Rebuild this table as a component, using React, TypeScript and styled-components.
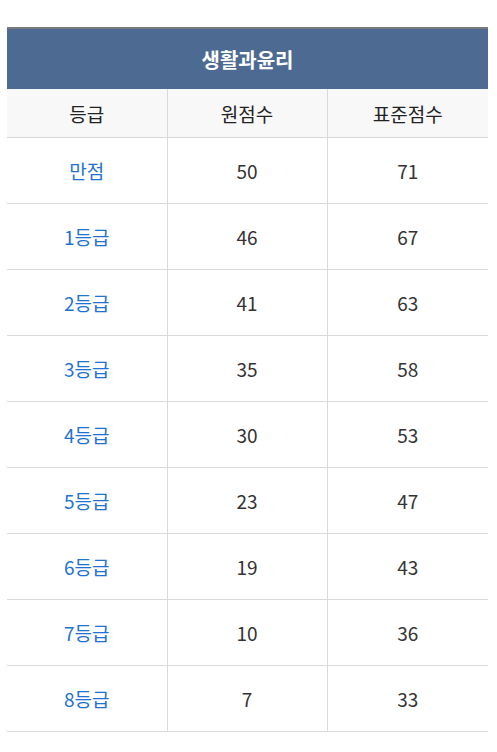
import React from "react";
import styled, { createGlobalStyle } from "styled-components";

const GlobalStyle = createGlobalStyle`
  html, body {
    margin: 0;
    padding: 0;
    background: #fff;
  }
  body {
    font-family: "Malgun Gothic", "Noto Sans CJK KR", "Noto Sans", sans-serif;
  }
`;

const Wrap = styled.div`
  padding: 27px 9px 20px 7px;
`;

const Table = styled.table`
  width: 481px;
  border-collapse: collapse;
  border-top: 2px solid #7a7a7a;
  table-layout: fixed;
`;

const TitleCell = styled.th`
  background: #4d6a92;
  color: #fff;
  font-size: 20px;
  font-weight: 700;
  height: 60px;
  padding: 0;
  text-align: center;
`;

const HeadCell = styled.th`
  background: #f8f8f8;
  color: #222;
  font-size: 19px;
  font-weight: 400;
  height: 48px;
  padding: 0;
  text-align: center;
  border-bottom: 1px solid #d9d9d9;
  & + & {
    border-left: 1px solid #d9d9d9;
  }
`;

const Cell = styled.td<{ $grade?: boolean }>`
  color: ${(p) => (p.$grade ? "#1f72d0" : "#333")};
  font-size: 19px;
  height: 65px;
  padding: 0;
  text-align: center;
  border-bottom: 1px solid #d9d9d9;
  & + & {
    border-left: 1px solid #d9d9d9;
  }
`;

const rows: [string, number, number][] = [
  ["만점", 50, 71],
  ["1등급", 46, 67],
  ["2등급", 41, 63],
  ["3등급", 35, 58],
  ["4등급", 30, 53],
  ["5등급", 23, 47],
  ["6등급", 19, 43],
  ["7등급", 10, 36],
  ["8등급", 7, 33],
];

export default function App() {
  return (
    <>
      <GlobalStyle />
      <Wrap>
        <Table>
          <colgroup>
            <col style={{ width: 160 }} />
            <col style={{ width: 160 }} />
            <col style={{ width: 161 }} />
          </colgroup>
          <thead>
            <tr>
              <TitleCell colSpan={3}>생활과윤리</TitleCell>
            </tr>
            <tr>
              <HeadCell>등급</HeadCell>
              <HeadCell>원점수</HeadCell>
              <HeadCell>표준점수</HeadCell>
            </tr>
          </thead>
          <tbody>
            {rows.map(([g, raw, std]) => (
              <tr key={g}>
                <Cell $grade>{g}</Cell>
                <Cell>{raw}</Cell>
                <Cell>{std}</Cell>
              </tr>
            ))}
          </tbody>
        </Table>
      </Wrap>
    </>
  );
}
